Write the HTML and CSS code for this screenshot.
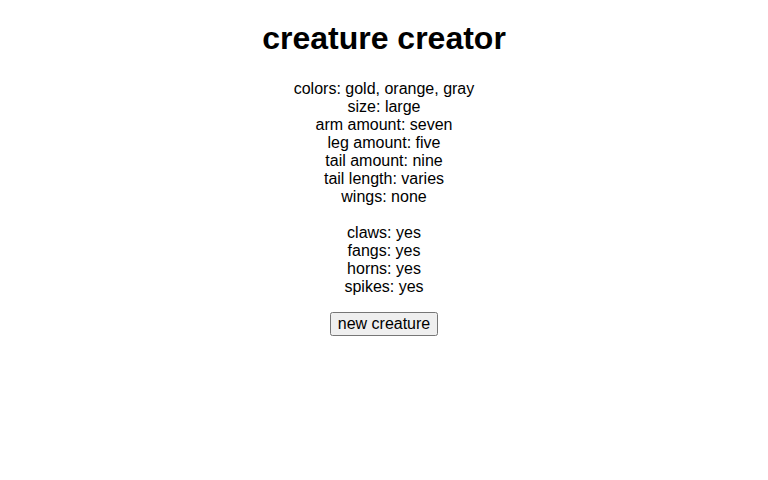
FILE: index.html
```html
<!DOCTYPE html>
<html lang="en">
<head>
    <meta charset="UTF-8">
    <meta name="viewport" content="width=device-width, initial-scale=1.0">
    <title>creature creator</title>
    <link rel="stylesheet" href="styles.css">
</head>
<body>

    <h1>creature creator</h1>

    <!-- traits of the current creature -->
    <p class="traits">
        colors: gold, orange, gray<br>
        size: large<br>
        arm amount: seven<br>
        leg amount: five<br>
        tail amount: nine<br>
        tail length: varies<br>
        wings: none<br>
        <br>
        claws: yes<br>
        fangs: yes<br>
        horns: yes<br>
        spikes: yes
    </p>

    <div class="controls">
        <button class="new-btn">new creature</button>
    </div>

</body>
</html>
```

FILE: styles.css
```css
body {
    font-family: "Liberation Sans", Arial, sans-serif;
    text-align: center;
    margin: 8px;
    color: #000;
    background-color: #fff;
}

h1 {
    font-size: 32px;
    margin: 12px 0 23px;
}

.traits {
    font-size: 16px;
    line-height: 18px;
    margin: 0 0 16px;
}

.new-btn {
    font-family: "Liberation Sans", Arial, sans-serif;
    font-size: 16px;
}
```
